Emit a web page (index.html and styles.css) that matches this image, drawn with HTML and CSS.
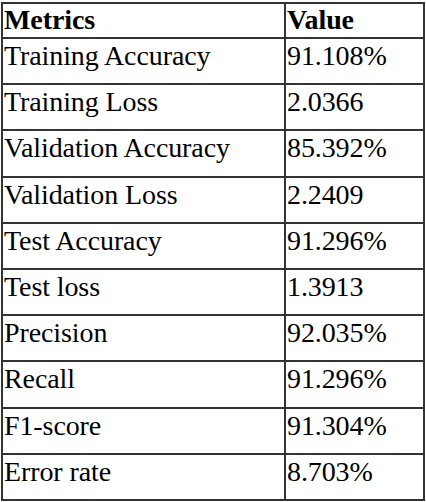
FILE: index.html
```html
<!DOCTYPE html>
<html>
<head>
<meta charset="utf-8">
<link rel="stylesheet" href="styles.css">
</head>
<body>
<table class="metrics">
  <thead>
    <tr class="head-row"><th class="col-name">Metrics</th><th class="col-value">Value</th></tr>
  </thead>
  <tbody>
    <tr><td>Training Accuracy</td><td>91.108%</td></tr>
    <tr><td>Training Loss</td><td>2.0366</td></tr>
    <tr><td>Validation Accuracy</td><td>85.392%</td></tr>
    <tr><td>Validation Loss</td><td>2.2409</td></tr>
    <tr><td>Test Accuracy</td><td>91.296%</td></tr>
    <tr><td>Test loss</td><td>1.3913</td></tr>
    <tr><td>Precision</td><td>92.035%</td></tr>
    <tr><td>Recall</td><td>91.296%</td></tr>
    <tr><td>F1-score</td><td>91.304%</td></tr>
    <tr><td>Error rate</td><td>8.703%</td></tr>
  </tbody>
</table>
</body>
</html>
```
FILE: styles.css
```css
html, body {
  margin: 0;
  padding: 0;
  background: #ffffff;
}
body {
  padding: 2px 0 0 1px;
}
.metrics {
  border-collapse: collapse;
  width: 424px;
  font-family: "Liberation Serif", "Times New Roman", serif;
  font-size: 28px;
  color: #000;
  table-layout: fixed;
}
.metrics th,
.metrics td {
  border: 2px solid #333;
  padding: 0 1px;
  text-align: left;
  vertical-align: top;
  line-height: 31px;
  white-space: nowrap;
  letter-spacing: -0.1px;
}
.metrics th {
  font-weight: bold;
}
.col-name { width: 279px; }
.head-row { height: 35px; }
.metrics tbody tr { height: 46.2px; }
.metrics tbody td { padding-top: 1px; }
```
